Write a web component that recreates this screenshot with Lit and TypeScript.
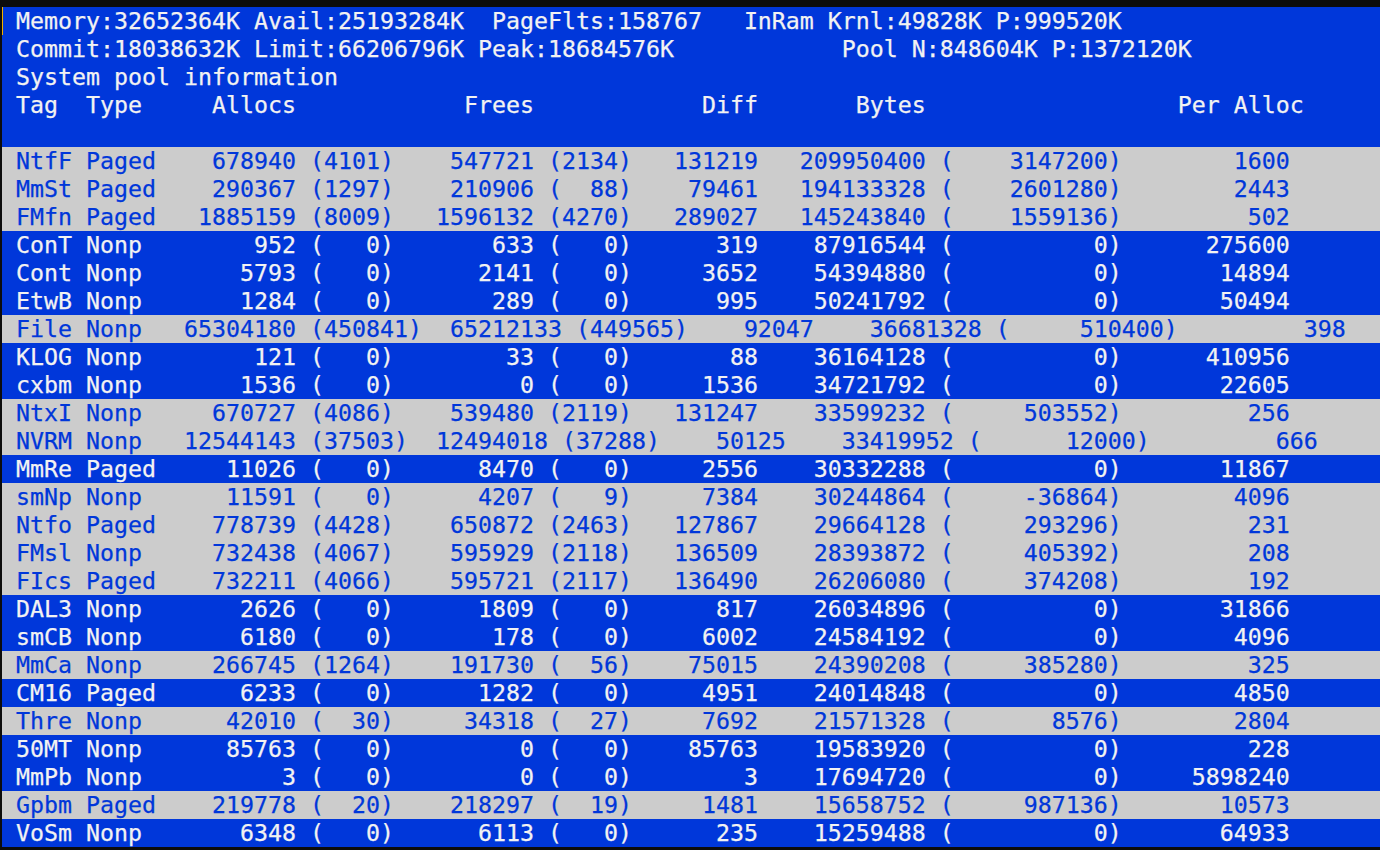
import { LitElement, html, css } from "lit";
import { customElement } from "lit/decorators.js";

type Row = [string, string, number, number, number, number, number, number, number, number, boolean];

const ROWS: Row[] = [
  ["NtfF", "Paged", 678940, 4101, 547721, 2134, 131219, 209950400, 3147200, 1600, true],
  ["MmSt", "Paged", 290367, 1297, 210906, 88, 79461, 194133328, 2601280, 2443, true],
  ["FMfn", "Paged", 1885159, 8009, 1596132, 4270, 289027, 145243840, 1559136, 502, true],
  ["ConT", "Nonp", 952, 0, 633, 0, 319, 87916544, 0, 275600, false],
  ["Cont", "Nonp", 5793, 0, 2141, 0, 3652, 54394880, 0, 14894, false],
  ["EtwB", "Nonp", 1284, 0, 289, 0, 995, 50241792, 0, 50494, false],
  ["File", "Nonp", 65304180, 450841, 65212133, 449565, 92047, 36681328, 510400, 398, true],
  ["KLOG", "Nonp", 121, 0, 33, 0, 88, 36164128, 0, 410956, false],
  ["cxbm", "Nonp", 1536, 0, 0, 0, 1536, 34721792, 0, 22605, false],
  ["NtxI", "Nonp", 670727, 4086, 539480, 2119, 131247, 33599232, 503552, 256, true],
  ["NVRM", "Nonp", 12544143, 37503, 12494018, 37288, 50125, 33419952, 12000, 666, true],
  ["MmRe", "Paged", 11026, 0, 8470, 0, 2556, 30332288, 0, 11867, false],
  ["smNp", "Nonp", 11591, 0, 4207, 9, 7384, 30244864, -36864, 4096, true],
  ["Ntfo", "Paged", 778739, 4428, 650872, 2463, 127867, 29664128, 293296, 231, true],
  ["FMsl", "Nonp", 732438, 4067, 595929, 2118, 136509, 28393872, 405392, 208, true],
  ["FIcs", "Paged", 732211, 4066, 595721, 2117, 136490, 26206080, 374208, 192, true],
  ["DAL3", "Nonp", 2626, 0, 1809, 0, 817, 26034896, 0, 31866, false],
  ["smCB", "Nonp", 6180, 0, 178, 0, 6002, 24584192, 0, 4096, false],
  ["MmCa", "Nonp", 266745, 1264, 191730, 56, 75015, 24390208, 385280, 325, true],
  ["CM16", "Paged", 6233, 0, 1282, 0, 4951, 24014848, 0, 4850, false],
  ["Thre", "Nonp", 42010, 30, 34318, 27, 7692, 21571328, 8576, 2804, true],
  ["50MT", "Nonp", 85763, 0, 0, 0, 85763, 19583920, 0, 228, false],
  ["MmPb", "Nonp", 3, 0, 0, 0, 3, 17694720, 0, 5898240, false],
  ["Gpbm", "Paged", 219778, 20, 218297, 19, 1481, 15658752, 987136, 10573, true],
  ["VoSm", "Nonp", 6348, 0, 6113, 0, 235, 15259488, 0, 64933, false],
];

const HEADER = [
  " Memory:32652364K Avail:25193284K  PageFlts:158767   InRam Krnl:49828K P:999520K",
  " Commit:18038632K Limit:66206796K Peak:18684576K            Pool N:848604K P:1372120K",
  " System pool information",
  " Tag  Type     Allocs            Frees            Diff       Bytes                  Per Alloc",
  " ",
];

const pad = (v: number, w: number) => String(v).padStart(w, " ");

function formatRow(r: Row): string {
  const [tag, type, al, ald, fr, frd, diff, bytes, bd, per] = r;
  return (
    " " + tag.padEnd(4, " ") + " " + type.padEnd(5, " ") +
    pad(al, 10) + " (" + pad(ald, 4) + ")" +
    pad(fr, 10) + " (" + pad(frd, 4) + ")" +
    pad(diff, 9) +
    pad(bytes, 12) + " (" + pad(bd, 11) + ")" +
    pad(per, 12)
  );
}

@customElement("app-root")
export class AppRoot extends LitElement {
  static styles = css`
    :host {
      display: block;
      position: relative;
      width: 1380px;
      height: 850px;
      overflow: hidden;
      box-sizing: border-box;
      padding: 7px 0 0 2px;
      background: #0c0c0c;
      font-family: "DejaVu Sans Mono", monospace;
      font-size: 23.25px;
      -webkit-text-stroke: 0.25px currentColor;
    }
    .line {
      height: 28px;
      line-height: 28px;
      white-space: pre;
      overflow: hidden;
      background: #0037da;
      color: #f2f2f2;
    }
    .line.hi {
      background: #cccccc;
      color: #0037da;
    }
    .cursor {
      position: absolute;
      left: 2px;
      top: 7px;
      width: 1px;
      height: 28px;
      background: #f0b000;
    }
  `;

  render() {
    return html`
      ${HEADER.map((l) => html`<div class="line">${l}</div>`)}
      ${ROWS.map((r) => html`<div class="line ${r[10] ? "hi" : ""}">${formatRow(r)}</div>`)}
      <div class="cursor"></div>
    `;
  }
}
